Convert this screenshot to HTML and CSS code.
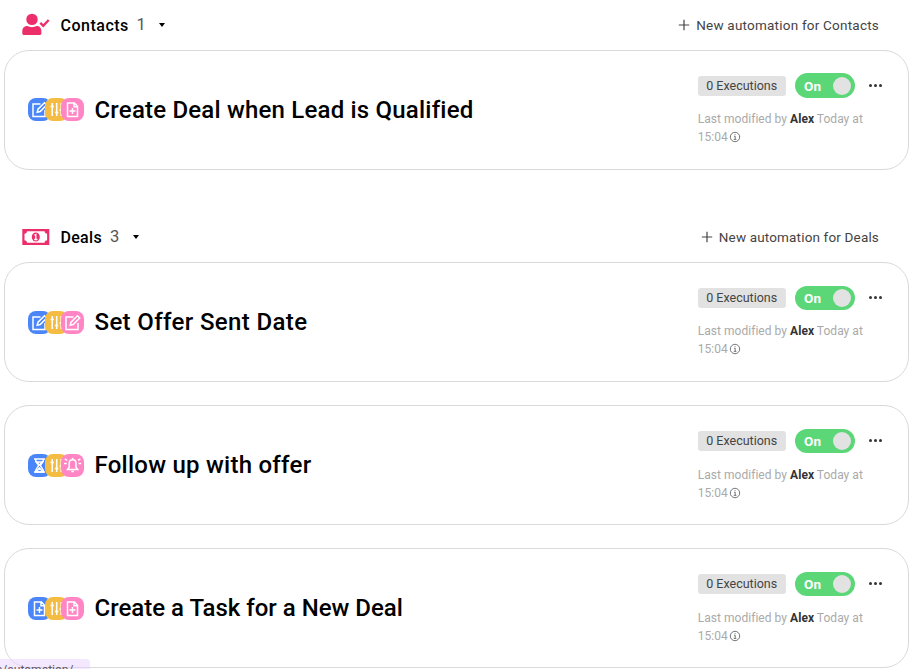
FILE: index.html
```html
<!DOCTYPE html>
<html lang="en">
<head>
<meta charset="utf-8">
<title>Automations</title>
<link rel="stylesheet" href="styles.css">
</head>
<body>
<svg class="defs" aria-hidden="true">
  <symbol id="edit" viewBox="0 0 23 23"><path d="M12.500 6H5v12.500h12V12M9.200 14.200l.8-3 6.500-6.400 2.200 2.200-6.500 6.500z"/></symbol>
  <symbol id="sliders" viewBox="0 0 23 23"><path d="M7.200 5v13M11.700 5v13M16.200 5v13M5.500 8.500h3.400M10 14.500h3.400M14.500 12h3.400"/></symbol>
  <symbol id="file" viewBox="0 0 23 23"><path d="M6.500 5h7l3 3.200v10.300h-10zM13 5v3.800h3.500M11.500 10v6M8.500 13h6"/></symbol>
  <symbol id="hourglass" viewBox="0 0 23 23"><path d="M6 5h11M6 18h11M7.500 5c0 4 3 5 3 6.500s-3 3-3 6.500M15.500 5c0 4-3 5-3 6.500s3 3 3 6.500"/><path class="solid" d="M8.500 8h6l-3 3zM8 18l3.500-4 3.500 4z"/></symbol>
  <symbol id="bell" viewBox="0 0 23 23"><path d="M6.500 15.500h10.200L15 13.300V9.500c0-2.500-1.300-3.700-3.400-3.700S8.200 7 8.200 9.500v3.800zM11.600 4v1.800M10.300 17.600h2.600M3.800 4.800l2.400 1.500M3 9.500h2.700M19.400 4.800L17 6.300M20.200 9.500h-2.700"/></symbol>
  <symbol id="plus" viewBox="0 0 12 12"><path d="M6 .8v10.400M.8 6h10.400"/></symbol>
  <symbol id="info" viewBox="0 0 12 12"><circle cx="6" cy="6" r="4.700"/><path d="M5 5.200h1.200v3M4.800 8.400h2.600M5.700 3.500h.8"/></symbol>
</svg>
<main>
  <section class="group">
    <header class="head">
      <svg class="entity" viewBox="0 0 28 24"><circle cx="10" cy="6.400" r="5.700"/><path d="M.3 18.500c0-3 1.800-5.400 4.800-5.400 1.600.8 3.200 1.100 4.900 1.100s3.300-.3 4.900-1.100c3 0 4.500 2.400 4.500 5.400v1.800c0 1-.8 1.800-1.800 1.800H2.100c-1 0-1.800-.8-1.800-1.800z"/><path class="check" d="M18.300 9.800l3 3 5.400-5.800"/></svg>
      <h2 class="name contacts">Contacts</h2><span class="count">1</span><i class="caret"></i>
      <a class="new"><svg><use href="#plus"/></svg><span>New automation for Contacts</span></a>
    </header>
    <article class="card">
      <div class="steps"><svg class="blue"><use href="#edit"/></svg><svg class="yellow"><use href="#sliders"/></svg><svg class="pink"><use href="#file"/></svg></div>
      <h3 class="title t1">Create Deal when Lead is Qualified</h3>
      <div class="meta"><div class="controls"><span class="pill"><span>0 Executions</span></span><span class="toggle"><span>On</span><i></i></span><span class="dots"><i></i><i></i><i></i></span></div>
      <p class="modified"><span>Last modified by <b>Alex</b> Today at</span><br><span class="time">15:04</span><svg><use href="#info"/></svg></p></div>
    </article>
  </section>
  <section class="group">
    <header class="head">
      <svg class="entity" viewBox="0 0 28 24"><path fill-rule="evenodd" d="M.3 4h27v16H.3zM5 6.200c0 1.500-1 2.500-2.500 2.500v6.600c1.500 0 2.500 1 2.500 2.500h17.600c0-1.500 1-2.500 2.500-2.500V8.700c-1.500 0-2.500-1-2.500-2.500z"/><ellipse cx="13.800" cy="12" rx="4" ry="4.500"/><path class="one" d="M12.400 10.300l1.400-.8v4.800M12.200 14.500h3.200"/></svg>
      <h2 class="name deals">Deals</h2><span class="count">3</span><i class="caret"></i>
      <a class="new new-deals"><svg><use href="#plus"/></svg><span>New automation for Deals</span></a>
    </header>
    <article class="card">
      <div class="steps"><svg class="blue"><use href="#edit"/></svg><svg class="yellow"><use href="#sliders"/></svg><svg class="pink"><use href="#edit"/></svg></div>
      <h3 class="title t2">Set Offer Sent Date</h3>
      <div class="meta"><div class="controls"><span class="pill"><span>0 Executions</span></span><span class="toggle"><span>On</span><i></i></span><span class="dots"><i></i><i></i><i></i></span></div>
      <p class="modified"><span>Last modified by <b>Alex</b> Today at</span><br><span class="time">15:04</span><svg><use href="#info"/></svg></p></div>
    </article>
    <article class="card">
      <div class="steps"><svg class="blue"><use href="#hourglass"/></svg><svg class="yellow"><use href="#sliders"/></svg><svg class="pink"><use href="#bell"/></svg></div>
      <h3 class="title t3">Follow up with offer</h3>
      <div class="meta"><div class="controls"><span class="pill"><span>0 Executions</span></span><span class="toggle"><span>On</span><i></i></span><span class="dots"><i></i><i></i><i></i></span></div>
      <p class="modified"><span>Last modified by <b>Alex</b> Today at</span><br><span class="time">15:04</span><svg><use href="#info"/></svg></p></div>
    </article>
    <article class="card">
      <div class="steps"><svg class="blue"><use href="#file"/></svg><svg class="yellow"><use href="#sliders"/></svg><svg class="pink"><use href="#file"/></svg></div>
      <h3 class="title">Create a Task for a New Deal</h3>
      <div class="meta"><div class="controls"><span class="pill"><span>0 Executions</span></span><span class="toggle"><span>On</span><i></i></span><span class="dots"><i></i><i></i><i></i></span></div>
      <p class="modified"><span>Last modified by <b>Alex</b> Today at</span><br><span class="time">15:04</span><svg><use href="#info"/></svg></p></div>
    </article>
  </section>
</main>
<div class="status">e/automation/</div>
</body>
</html>
```
FILE: styles.css
```css
* { box-sizing: border-box; }
html, body { height: 100%; }
body { margin: 0; overflow: hidden; background: #fff; color: #000; font-family: Roboto, "Liberation Sans", sans-serif; }
h2, h3, p { margin: 0; font-weight: 500; }
.defs { position: absolute; width: 0; height: 0; }
main { padding: 0 4px; }
.group + .group { margin-top: 42.300px; }
.head { display: flex; align-items: center; height: 50px; padding: 0 30px 0 18px; }
.entity { width: 28px; height: 24px; margin-right: 10.500px; fill: #ec2f6b; }
.check { fill: none; stroke: #ec2f6b; stroke-width: 2.4; }
.one { fill: none; stroke: #fff; stroke-width: 1.3; }
.name { padding-top: 1px; font-size: 16px; line-height: 20px; }
.contacts { letter-spacing: .5px; width: 68px; }
.deals { letter-spacing: .3px; width: 41.500px; }
.count { width: 9px; margin-left: 8px; font-size: 16.500px; line-height: 20px; color: #555; }
.caret { margin-left: 13.500px; border: 3.500px solid transparent; border-top: 4px solid #000; border-bottom: 0; }
.new { display: flex; align-items: center; gap: 6px; margin-left: auto; font-size: 13.500px; letter-spacing: .22px; color: #444; white-space: nowrap; }
.new-deals { letter-spacing: .16px; }
.new svg { width: 12px; height: 12px; fill: none; stroke: #444; stroke-width: 1.2; }
.card { display: grid; grid-template-columns: 56px 1fr 187.300px; column-gap: 10.500px; align-items: center; height: 120px; padding: 0 23px; border: 1px solid #d9d9d9; border-radius: 25px; }
.card + .card { margin-top: 23.100px; }
.steps { display: flex; margin-bottom: .3px; }
.steps svg { width: 23px; height: 23px; flex: none; border-radius: 8px; fill: none; stroke: #fff; stroke-width: 1.5; }
.steps svg + svg { margin-left: -6.500px; }
.steps .solid { fill: #fff; stroke: none; }
.blue { background: #4a86f7; }
.yellow { background: #f4bc42; }
.pink { background: #ff85c5; }
.title { font-size: 24px; line-height: 30px; white-space: nowrap; }
.t1 { letter-spacing: .2px; }
.t2 { letter-spacing: .36px; }
.t3 { letter-spacing: .25px; }
.meta { align-self: start; padding-top: 22px; }
.controls { display: flex; align-items: center; height: 25px; }
.pill { width: 88px; height: 20px; border-radius: 3px; background: #e2e2e2; font-size: 12.500px; line-height: 19px; text-align: center; color: #444; white-space: nowrap; }
.toggle { display: flex; align-items: center; justify-content: space-between; width: 60px; height: 24.500px; margin-left: 9.300px; padding: 0 4px 0 9px; border-radius: 13px; background: #5bd778; color: #fff; font-size: 13.500px; font-weight: 700; letter-spacing: .2px; }
.toggle i { width: 18px; height: 18px; border-radius: 50%; background: #e2e2e2; }
.dots { display: flex; gap: 2px; margin-left: 14px; }
.dots i { width: 3px; height: 3px; border-radius: 50%; background: #333; }
.modified { margin-top: 12.200px; font-size: 12px; line-height: 18px; font-weight: 400; letter-spacing: .04px; color: #aaa; white-space: nowrap; }
.modified b { color: #333; }
.modified svg { width: 12px; height: 12px; margin-left: 1.300px; vertical-align: -2px; fill: none; stroke: #666; stroke-width: .9; }
.status { position: absolute; left: 0; bottom: 0; width: 90px; height: 10px; overflow: hidden; border-top-right-radius: 4px; background: rgba(232, 210, 252, .5); color: #5f5765; font-size: 12px; line-height: 18px; text-indent: -4px; padding-top: 2px; }
```
